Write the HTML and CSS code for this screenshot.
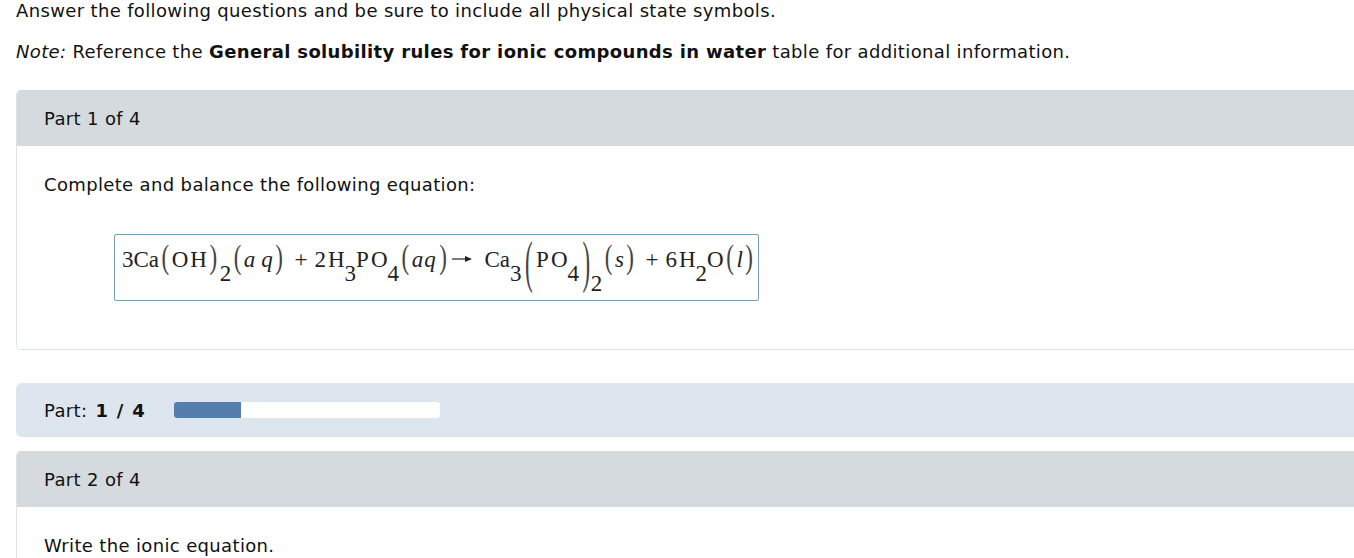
FILE: index.html
```html
<!DOCTYPE html>
<html>
<head>
<meta charset="utf-8">
<link rel="stylesheet" href="styles.css">
</head>
<body>
<div class="page">
  <p class="intro">Answer the following questions and be sure to include all physical state symbols.</p>
  <p class="note"><i>Note:</i> Reference the <b>General solubility rules for ionic compounds in water</b> table for additional information.</p>

  <section class="card">
    <div class="card-head">Part 1 of 4</div>
    <div class="card-body">
      <p class="prompt">Complete and balance the following equation:</p>
      <div class="eq-box">
        <div class="eq"><span>3Ca</span><span class="p">(</span><span class="l1">O</span>H<span class="p">)</span><span class="sub">2</span><span class="p">(</span><i class="sp1">a</i><i>q</i><span class="p">)</span><span class="op">+</span><span class="l1">2</span>H<span class="sub">3</span><span class="l1">P</span>O<span class="sub">4</span><span class="p">(</span><i class="aq">aq</i><span class="p">)</span><span class="arrow"><svg width="20" height="8" viewBox="0 0 20 8"><line x1="0" y1="4" x2="14" y2="4" stroke="#222" stroke-width="1.2"/><path d="M13 1 L20 4 L13 7 Z" fill="#222"/></svg></span>Ca<span class="sub">3</span><span class="p big">(</span><span class="l1">P</span>O<span class="sub">4</span><span class="p big">)</span><span class="sub low">2</span><span class="p">(</span><i>s</i><span class="p">)</span><span class="op">+</span><span class="l1">6</span>H<span class="sub">2</span>O<span class="p">(</span><i>l</i><span class="p">)</span></div>
      </div>
    </div>
  </section>

  <div class="progress">
    <span class="progress-label">Part: <b>1 / 4</b></span>
    <div class="bar"><div class="fill" style="width:25%"></div></div>
  </div>

  <section class="card">
    <div class="card-head">Part 2 of 4</div>
    <div class="card-body">
      <p class="prompt">Write the ionic equation.</p>
    </div>
  </section>
</div>
</body>
</html>
```

FILE: styles.css
```css
html, body {
  margin: 0;
  padding: 0;
  background: #ffffff;
  overflow: hidden;
}
body {
  font-family: "DejaVu Sans", Verdana, sans-serif;
  font-size: 18px;
  letter-spacing: 0.35px;
  color: #111;
}
.page {
  padding-left: 16px;
  margin-right: -40px;
}
.intro {
  margin: 0;
  line-height: 22px;
}
.note {
  margin: 19px 0 0 0;
  line-height: 22px;
}
.card {
  margin-top: 27px;
  border-left: 1px solid #dde2e5;
  border-bottom: 1px solid #dde2e5;
  border-radius: 5px 0 0 5px;
  overflow: hidden;
}
.card-head {
  background: #d4dadd;
  height: 56px;
  display: flex;
  align-items: center;
  padding-left: 27px;
}
.card-body {
  padding: 28px 0 48px 27px;
}
.prompt {
  margin: 0;
  line-height: 22px;
}
.eq-box {
  margin: 38px 0 0 70px;
  width: 643px;
  height: 65px;
  border: 1px solid #7b9fb3;
  border-radius: 2px;
}

/* equation */
.eq {
  font-family: "Liberation Serif", "Times New Roman", serif;
  font-size: 23px;
  letter-spacing: 0;
  line-height: 30px;
  padding: 10px 0 0 7px;
  white-space: nowrap;
  color: #222;
}
.l1 { margin-right: 2px; }
.sp1 { margin-right: 6px; }
.aq { letter-spacing: 1px; }
.sub {
  display: inline-block;
  vertical-align: -14px;
  line-height: 1;
}
.sub.low { vertical-align: -24px; margin-left: -3px; }
.p {
  display: inline-block;
  margin: 0 2.5px;
  color: #444;
  transform: translateY(-3px) scaleY(1.5);
}
.p.big {
  margin: 0 3.5px;
  transform: translateY(3px) scaleY(2.5);
}
.op {
  display: inline-block;
  font-size: 23px;
  margin: 0 7px 0 9px;
}
.arrow {
  display: inline-block;
  margin: 0 12px 0 3px;
  vertical-align: 4px;
}
.arrow svg { display: block; }

/* progress */
.progress {
  margin-top: 33px;
  height: 54px;
  background: #dde5ee;
  border-radius: 6px;
  display: flex;
  align-items: center;
  padding-left: 28px;
}
.progress-label {
  width: 130px;
}
.progress-label b {
  margin-left: 2px;
  letter-spacing: 1.3px;
}
.bar {
  width: 266px;
  height: 16px;
  background: #ffffff;
  border-radius: 3px;
  overflow: hidden;
}
.fill {
  height: 100%;
  background: #567db0;
}
.progress + .card {
  margin-top: 14px;
}
```
